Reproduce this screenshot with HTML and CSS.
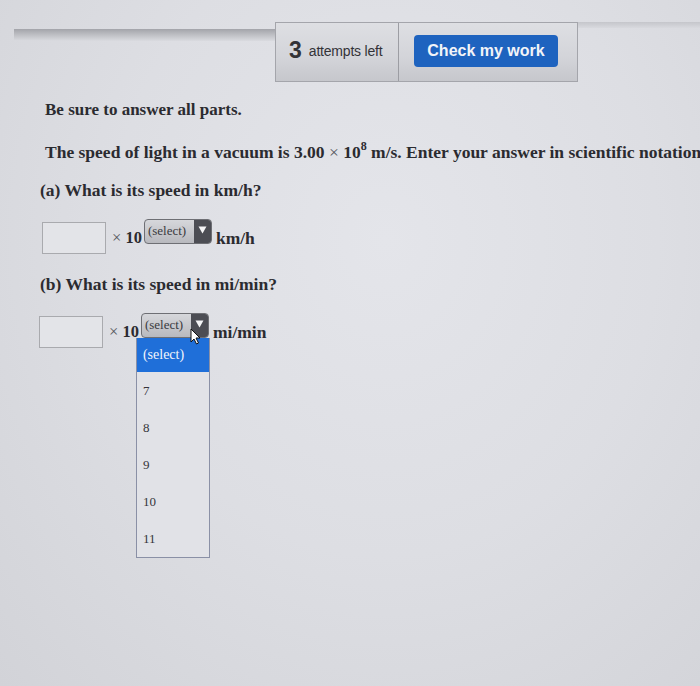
FILE: index.html
```html
<!DOCTYPE html>
<html>
<head>
<meta charset="utf-8">
<link rel="stylesheet" href="styles.css">
</head>
<body>
<div class="page">
  <header class="header">
    <div class="rule-left"></div>
    <div class="tools">
      <div class="attempts"><span class="num">3</span><span class="lbl">attempts left</span></div>
      <div class="check-cell"><button class="check">Check my work</button></div>
    </div>
    <div class="rule-right"></div>
  </header>

  <main class="content">
    <p class="line intro">Be sure to answer all parts.</p>
    <p class="line stmt">The speed of light in a vacuum is 3.00 <span class="x">×</span> 10<sup>8</sup> m/s. Enter your answer in scientific notation.</p>
    <p class="line qa">(a) What is its speed in km/h?</p>
    <div class="answer row-a">
      <div class="box"></div>
      <span class="times"><span class="x">×</span> 10</span>
      <div class="sel"><span class="sel-text">(select)</span><span class="sel-btn"><svg width="9" height="8" viewBox="0 0 9 8"><path d="M0.5 0.5 H8.5 L4.5 7.5 Z" fill="#f4f4f6"/></svg></span></div>
      <span class="unit">km/h</span>
    </div>
    <p class="line qb">(b) What is its speed in mi/min?</p>
    <div class="answer row-b">
      <div class="box"></div>
      <span class="times"><span class="x">×</span> 10</span>
      <div class="sel open"><span class="sel-text">(select)</span><span class="sel-btn"><svg width="9" height="8" viewBox="0 0 9 8"><path d="M0.5 0.5 H8.5 L4.5 7.5 Z" fill="#f4f4f6"/></svg></span>
        <ul class="list">
          <li class="hl">(select)</li>
          <li>7</li>
          <li>8</li>
          <li>9</li>
          <li>10</li>
          <li>11</li>
        </ul>
        <svg class="cursor" width="11" height="17" viewBox="0 0 11 17"><path d="M1 1 L1 14 L4 11 L6.5 16 L8.5 15 L6 10 L10 10 Z" fill="#fff" stroke="#111" stroke-width="1"/></svg>
      </div>
      <span class="unit">mi/min</span>
    </div>
  </main>
</div>
</body>
</html>
```

FILE: styles.css
```css
html, body {
  margin: 0;
  padding: 0;
}
body {
  width: 700px;
  height: 686px;
  overflow: hidden;
  background: radial-gradient(ellipse at 55% 35%, #e4e5ea 0%, #dddee3 50%, #d2d3d8 100%);
  font-family: "Liberation Serif", "Times New Roman", serif;
  color: #2b2b30;
}
.page {
  position: relative;
  height: 686px;
}
.header {
  display: flex;
  align-items: flex-start;
  padding-top: 22px;
  padding-left: 14px;
  height: 61px;
}
.rule-left {
  width: 261px;
  height: 12px;
  margin-top: 7px;
  background: linear-gradient(#a3a4aa, #c4c5ca 60%, #dadbe0);
}
.tools {
  display: flex;
  width: 303px;
  height: 60px;
  border: 1px solid #a4a5ab;
  background: linear-gradient(#dedfe3, #d3d4d9 60%, #c6c7cc);
  box-sizing: border-box;
}
.attempts {
  width: 123px;
  border-right: 1px solid #9c9da3;
  display: flex;
  align-items: center;
  padding-left: 13px;
  padding-bottom: 3px;
  box-sizing: border-box;
  font-family: "Liberation Sans", Arial, sans-serif;
  color: #333338;
}
.num {
  font-size: 23px;
  font-weight: bold;
  margin-right: 7px;
}
.lbl {
  font-size: 14px;
  letter-spacing: -0.2px;
}
.check-cell {
  flex: 1;
  display: flex;
  align-items: flex-start;
  padding-left: 15px;
  padding-top: 12px;
}
.check {
  width: 144px;
  height: 32px;
  border: none;
  border-radius: 4px;
  background: #1e63bf;
  color: #f2f4f8;
  font-family: "Liberation Sans", Arial, sans-serif;
  font-weight: bold;
  font-size: 16px;
  padding: 0;
}
.rule-right {
  flex: 1;
  height: 6px;
  background: linear-gradient(#c5c6cb, #d8d9de);
}
.content {
  padding-left: 40px;
  padding-top: 17px;
}
.line {
  margin: 0;
  line-height: 20px;
  font-weight: bold;
  font-size: 17.5px;
  white-space: nowrap;
}
.intro {
  font-size: 17px;
}
.intro, .stmt {
  margin-left: 5px;
}
.stmt {
  margin-top: 22px;
}
.stmt sup {
  font-size: 12px;
  line-height: 0;
  vertical-align: 8px;
}
.x {
  font-weight: normal;
  color: #55565c;
}
.qa {
  margin-top: 18px;
}
.answer {
  display: flex;
  align-items: flex-start;
  margin-top: 22px;
}
.row-a {
  margin-left: 2px;
}
.row-b {
  margin-left: -1px;
}
.qb {
  margin-top: 20px;
}
.box {
  width: 64px;
  height: 32px;
  border: 1px solid #a9aaae;
  background: #e3e4e8;
  box-sizing: border-box;
}
.times {
  font-weight: bold;
  font-size: 16.5px;
  margin-left: 6px;
  margin-top: 7px;
  line-height: 18px;
}
.sel {
  position: relative;
  display: flex;
  width: 68px;
  height: 25px;
  margin-left: 2px;
  margin-top: -3px;
  border: 1px solid #6e6f74;
  border-radius: 4px;
  box-sizing: border-box;
  background: linear-gradient(#d6d7db, #b8b9be);
}
.sel-text {
  flex: 1;
  font-size: 13px;
  line-height: 21px;
  padding-left: 3px;
  color: #3a3a40;
}
.sel-btn {
  width: 17px;
  background: #4c4d54;
  display: flex;
  justify-content: center;
  align-items: flex-start;
  padding-top: 6px;
  box-sizing: border-box;
  border-radius: 0 3px 3px 0;
}
.unit {
  font-weight: bold;
  font-size: 17.5px;
  margin-left: 4px;
  margin-top: 7px;
  line-height: 18px;
}
.list {
  position: absolute;
  top: 24px;
  left: -6px;
  width: 74px;
  margin: 0;
  padding: 0;
  list-style: none;
  border: 1px solid #8a90a6;
  border-top: none;
  background: #e1e2e7;
  box-sizing: border-box;
  z-index: 2;
}
.list li {
  height: 37px;
  line-height: 37px;
  font-size: 13px;
  padding-left: 6px;
  color: #35353b;
}
.list li.hl {
  height: 34px;
  line-height: 34px;
  background: #1f6fd9;
  color: #f2f5fb;
  font-size: 14px;
  padding-left: 6px;
}
.cursor {
  position: absolute;
  left: 48px;
  top: 14px;
  z-index: 3;
}
```
